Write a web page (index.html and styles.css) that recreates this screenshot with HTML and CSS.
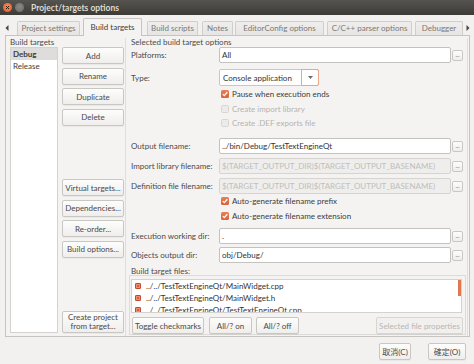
FILE: index.html
```html
<!DOCTYPE html>
<html>
<head>
<meta charset="utf-8">
<link rel="stylesheet" href="styles.css">
</head>
<body>
<div class="titlebar">
  <span class="wb close"><svg width="9" height="9" viewBox="0 0 9 9"><path d="M3 3 L6 6 M6 3 L3 6" stroke="#3a1a0c" stroke-width="1"/></svg></span>
  <span class="wb min"></span>
  <span class="title">Project/targets options</span>
</div>
<div class="tabbar">
  <span class="tarrow"><svg width="4" height="6" viewBox="0 0 4 6"><path d="M3.5 0 L0.5 3 L3.5 6 Z" fill="#444"/></svg></span>
  <div class="tab t1">Project settings</div>
  <div class="tab t2 active">Build targets</div>
  <div class="tab t3">Build scripts</div>
  <div class="tab t4">Notes</div>
  <div class="tab t5">EditorConfig options</div>
  <div class="tab t6">C/C++ parser options</div>
  <div class="tab t7">Debugger</div>
  <span class="tarrow ra"><svg width="4" height="6" viewBox="0 0 4 6"><path d="M0.5 0 L3.5 3 L0.5 6 Z" fill="#444"/></svg></span>
</div>
<div class="panel">
  <div class="lgroup">
    <div class="gtitle">Build targets</div>
    <div class="lbody">
      <div class="tlist">
        <div class="titem sel">Debug</div>
        <div class="titem">Release</div>
      </div>
      <div class="bcol">
        <div class="btn">Add</div>
        <div class="btn">Rename</div>
        <div class="btn">Duplicate</div>
        <div class="btn">Delete</div>
        <div class="btn gap2">Virtual targets...</div>
        <div class="btn">Dependencies...</div>
        <div class="btn">Re-order...</div>
        <div class="btn">Build options...</div>
        <div class="btn two">Create project<br>from target...</div>
      </div>
    </div>
  </div>
  <div class="rgroup">
    <div class="gtitle">Selected build target options</div>
    <div class="row">
      <span class="lab">Platforms:</span>
      <div class="inp">All</div>
      <span class="dots">...</span>
    </div>
    <div class="row sel-row m6">
      <span class="lab">Type:</span>
      <div class="select"><span class="seltext">Console application</span><span class="arrow"><svg width="5" height="3" viewBox="0 0 5 3"><path d="M0 0 H5 L2.5 3 Z" fill="#6b6b6b"/></svg></span></div>
    </div>
    <div class="crow m2">
      <span class="cb on"><svg width="8" height="8" viewBox="0 0 8 8"><path d="M1.8 4.1 L3.3 5.6 L6.3 2.3" fill="none" stroke="#fff" stroke-width="1.3"/></svg></span>
      <span>Pause when execution ends</span>
    </div>
    <div class="crow dis m3">
      <span class="cb off"></span>
      <span>Create import library</span>
    </div>
    <div class="crow dis m2">
      <span class="cb off"></span>
      <span>Create .DEF exports file</span>
    </div>
    <div class="row m9">
      <span class="lab">Output filename:</span>
      <div class="inp">../bin/Debug/TestTextEngineQt</div>
      <span class="dots">...</span>
    </div>
    <div class="row m4">
      <span class="lab">Import library filename:</span>
      <div class="inp disabled">$(TARGET_OUTPUT_DIR)$(TARGET_OUTPUT_BASENAME)</div>
      <span class="dots">...</span>
    </div>
    <div class="row m4">
      <span class="lab">Definition file filename:</span>
      <div class="inp disabled">$(TARGET_OUTPUT_DIR)$(TARGET_OUTPUT_BASENAME)</div>
      <span class="dots">...</span>
    </div>
    <div class="crow m1">
      <span class="cb on"><svg width="8" height="8" viewBox="0 0 8 8"><path d="M1.8 4.1 L3.3 5.6 L6.3 2.3" fill="none" stroke="#fff" stroke-width="1.3"/></svg></span>
      <span>Auto-generate filename prefix</span>
    </div>
    <div class="crow m3">
      <span class="cb on"><svg width="8" height="8" viewBox="0 0 8 8"><path d="M1.8 4.1 L3.3 5.6 L6.3 2.3" fill="none" stroke="#fff" stroke-width="1.3"/></svg></span>
      <span>Auto-generate filename extension</span>
    </div>
    <div class="row m6">
      <span class="lab">Execution working dir:</span>
      <div class="inp">.</div>
      <span class="dots">...</span>
    </div>
    <div class="row m3">
      <span class="lab">Objects output dir:</span>
      <div class="inp">obj/Debug/</div>
      <span class="dots">...</span>
    </div>
    <div class="fgroup">
      <div class="ftitle">Build target files:</div>
      <div class="fframe">
        <div class="flist">
          <div class="fitem"><span class="scb"></span>../../TestTextEngineQt/MainWidget.cpp</div>
          <div class="fitem"><span class="scb"></span>../../TestTextEngineQt/MainWidget.h</div>
          <div class="fitem"><span class="scb"></span>../../TestTextEngineQt/TestTextEngineQt.cpp</div>
          <span class="oscroll"></span>
        </div>
        <div class="fbtns">
          <div class="btn fb1">Toggle checkmarks</div>
          <div class="btn fb2">All/? on</div>
          <div class="btn fb3">All/? off</div>
          <div class="btn fb4 disabled">Selected file properties</div>
        </div>
      </div>
    </div>
  </div>
</div>
<div class="dlg">
  <div class="btn d1">取消(C)</div>
  <div class="btn d2">確定(O)</div>
</div>
</body>
</html>
```

FILE: styles.css
```css
* { box-sizing: border-box; margin: 0; padding: 0; }
html, body { width: 474px; height: 364px; overflow: hidden; }
body {
  background: #f2f1f0;
  font-family: Lato, "Noto Sans CJK TC", sans-serif;
  font-size: 8px;
  color: #3c3c3c;
}

/* title bar */
.titlebar {
  height: 15px;
  background: linear-gradient(#55544f, #3c3b37);
  display: flex;
  align-items: center;
  padding-left: 3px;
}
.wb { width: 9px; height: 9px; border-radius: 50%; display: block; flex: none; }
.wb svg { display: block; }
.close { background: radial-gradient(circle at 50% 40%, #f7905f, #e2541c); }
.min { background: radial-gradient(circle at 50% 40%, #8a8984, #6a6965); margin-left: 3px; }
.title { margin-left: 7px; color: #dfdbd2; font-weight: bold; font-size: 8.5px; }

/* tabs */
.tabbar {
  height: 20px;
  display: flex;
  align-items: flex-end;
  padding-left: 5px;
}
.tarrow { width: 12px; height: 14px; display: flex; align-items: center; flex: none; }
.tarrow.ra { margin-left: 3px; width: 6px; }
.tab {
  height: 14px;
  border: 1px solid #d0ceca;
  border-bottom: none;
  border-radius: 2px 2px 0 0;
  background: linear-gradient(#efeeec, #e6e5e3);
  color: #7a7977;
  text-align: center;
  line-height: 13px;
  white-space: nowrap;
  flex: none;
}
.tab.active {
  height: 18px;
  line-height: 16px;
  background: #f4f3f2;
  border-color: #c6c4c1;
  color: #3c3c3c;
  position: relative;
  z-index: 2;
  margin-bottom: -1px;
}
.t1 { width: 63px; }
.t2 { width: 59px; margin-left: 3px; }
.t3 { width: 51px; margin-left: 5px; }
.t4 { width: 31px; margin-left: 4px; }
.t5 { width: 89px; margin-left: 2px; }
.t6 { width: 85px; margin-left: 3px; }
.t7 { width: 48px; margin-left: 3px; }

/* main panel */
.panel {
  margin-left: 5px;
  width: 465px;
  height: 302px;
  border: 1px solid #c6c4c1;
  background: #f4f3f2;
  display: flex;
  padding: 2px 1px 0 1px;
}
.gtitle { height: 9px; line-height: 9px; color: #4a4a4a; white-space: nowrap; }

.lgroup {
  width: 119px;
  height: 298px;
  padding-left: 3px;
  border-right: 1px solid #e0dedb;
  flex: none;
}
.lbody { display: flex; height: 286px; }
.tlist {
  width: 48px;
  height: 286px;
  background: #fff;
  border: 1px solid #d4d2cf;
  flex: none;
}
.titem { height: 12px; line-height: 12px; padding-left: 2px; color: #3c3c3c; }
.titem.sel { background: #dedddb; font-weight: bold; }

.bcol {
  width: 62px;
  margin-left: 4px;
  display: flex;
  flex-direction: column;
  gap: 3.5px;
  flex: none;
}
.btn {
  height: 17px;
  border: 1px solid #c9c7c4;
  border-radius: 2px;
  background: linear-gradient(#fdfdfc, #efeeec);
  box-shadow: 0 1px 0 rgba(0,0,0,0.04);
  color: #4a4a4a;
  display: flex;
  align-items: center;
  justify-content: center;
  white-space: nowrap;
  flex: none;
}
.btn.gap2 { margin-top: 50px; }
.btn.two { height: 22px; line-height: 9px; text-align: center; margin-top: auto; }
.btn.disabled { color: #b8b6b3; background: #f1f0ef; border-color: #d8d6d3; }

/* right group */
.rgroup {
  width: 340px;
  height: 298px;
  margin-left: 2px;
  padding: 0 3px 0 3px;
  border-right: 1px solid #e0dedb;
  display: flex;
  flex-direction: column;
  flex: none;
}
.row { display: flex; align-items: center; height: 16px; flex: none; }
.row.sel-row { height: 17px; }
.lab { width: 88px; flex: none; color: #4a4a4a; white-space: nowrap; }
.inp {
  width: 232px;
  height: 16px;
  border: 1px solid #c4c2bf;
  border-radius: 2px;
  background: #fff;
  padding-left: 2px;
  line-height: 14px;
  white-space: nowrap;
  overflow: hidden;
  color: #333;
  flex: none;
}
.inp.disabled { background: #efeeec; color: #c0bebb; border-color: #d6d4d1; }
.dots {
  width: 11px;
  height: 11px;
  margin-left: 1px;
  border: 1px solid #c9c7c4;
  border-radius: 2px;
  background: linear-gradient(#fdfdfc, #eeedeb);
  font-size: 6px;
  line-height: 7px;
  text-align: center;
  color: #555;
  flex: none;
}
.select {
  width: 100px;
  height: 17px;
  border: 1px solid #c9c7c4;
  border-radius: 2px;
  background: #fff;
  display: flex;
  align-items: center;
  flex: none;
}
.seltext { flex: 1; padding-left: 3px; white-space: nowrap; color: #333; }
.arrow {
  width: 18px;
  height: 17px;
  margin: -1px -1px -1px 0;
  border: 1px solid #eaa68a;
  border-radius: 0 2px 2px 0;
  display: flex;
  align-items: center;
  justify-content: center;
  flex: none;
}
.arrow svg { display: block; }

.crow { display: flex; align-items: center; height: 12px; padding-left: 90px; flex: none; white-space: nowrap; color: #3c3c3c; }
.crow.dis { color: #b5b3b0; }
.cb { width: 8px; height: 8px; margin-right: 3px; border-radius: 1.5px; flex: none; display: block; }
.cb svg { display: block; }
.cb.on { background: linear-gradient(#ea7f52, #d9623a); border: none; }
.cb.off { background: #ecebe9; border: 1px solid #d8d6d3; }

.m1 { margin-top: 1px; }
.m2 { margin-top: 2px; }
.m3 { margin-top: 3px; }
.m4 { margin-top: 4px; }
.m6 { margin-top: 6px; }
.m9 { margin-top: 9px; }

/* files group */
.fgroup { margin: 4px -2px 0 -2px; flex: none; }
.ftitle { height: 8px; line-height: 8px; padding-left: 2px; color: #4a4a4a; }
.fframe {
  border: 1px solid #dddbd8;
  height: 60px;
  padding: 3px 2px 0 1px;
}
.flist {
  width: 331px;
  height: 34px;
  background: #fff;
  border: 1px solid #d4d2cf;
  overflow: hidden;
  position: relative;
}
.fitem {
  height: 12px;
  line-height: 12px;
  display: flex;
  align-items: center;
  padding-left: 3px;
  white-space: nowrap;
  color: #333;
}
.scb {
  width: 6px;
  height: 6px;
  margin-right: 5px;
  border-radius: 1px;
  background: #d85a3f;
  border: 1px solid #c04a30;
  flex: none;
  box-shadow: inset 0 0 0 1px #f08f74;
}
.oscroll {
  position: absolute;
  right: 0;
  top: 0;
  width: 3px;
  height: 16px;
  background: #e2764d;
}
.fbtns { display: flex; margin-top: 4px; }
.fb1 { width: 72px; margin-left: 1px; }
.fb2 { width: 43px; margin-left: 5px; }
.fb3 { width: 43px; margin-left: 4px; }
.fb4 { width: 87px; margin-left: auto; }

/* dialog buttons */
.dlg {
  height: 27px;
  display: flex;
  justify-content: flex-end;
  padding: 6px 8px 0 0;
}
.d1 { width: 32px; }
.d2 { width: 38px; margin-left: 17px; }
```
